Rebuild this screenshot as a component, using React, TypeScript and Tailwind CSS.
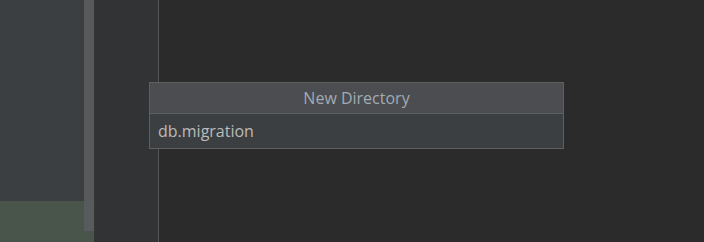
import React from 'react';

const App: React.FC = () => {
    return (
        <div className="relative flex w-[704px] h-[242px] overflow-hidden bg-[#2b2b2b]" style={{ fontFamily: '"Open Sans", "Noto Sans", sans-serif' }}>
            {/* Project tool window */}
            <div className="relative w-[94px] h-full flex flex-col bg-[#3c3f41]">
                <div className="flex-1" />
                <div className="h-[41px] bg-[#49544a]" />
                <div className="absolute left-[84px] top-0 w-[10px] h-[231px] bg-[#5a5c5e]/90" />
            </div>
            <div className="w-[2px] h-full bg-[#323435]" />

            {/* Gutter */}
            <div className="w-[63px] h-full bg-[#313335] border-r border-[#555555]" />

            {/* Editor */}
            <div className="flex-1 h-full bg-[#2b2b2b]" />

            {/* New Directory popup */}
            <div className="absolute left-[149px] top-[82px] w-[415px] flex flex-col border border-[#5e6060] bg-[#3c3f41]">
                <div className="h-[31px] flex items-center justify-center bg-[#4b4d50] border-b border-[#5e6060] text-[16px] text-[#a2abb5]">
                    New Directory
                </div>
                <div className="h-[34px] flex items-center px-[8px] text-[16px] text-[#bbbbbb]">
                    db.migration
                </div>
            </div>
        </div>
    );
};

export default App;
